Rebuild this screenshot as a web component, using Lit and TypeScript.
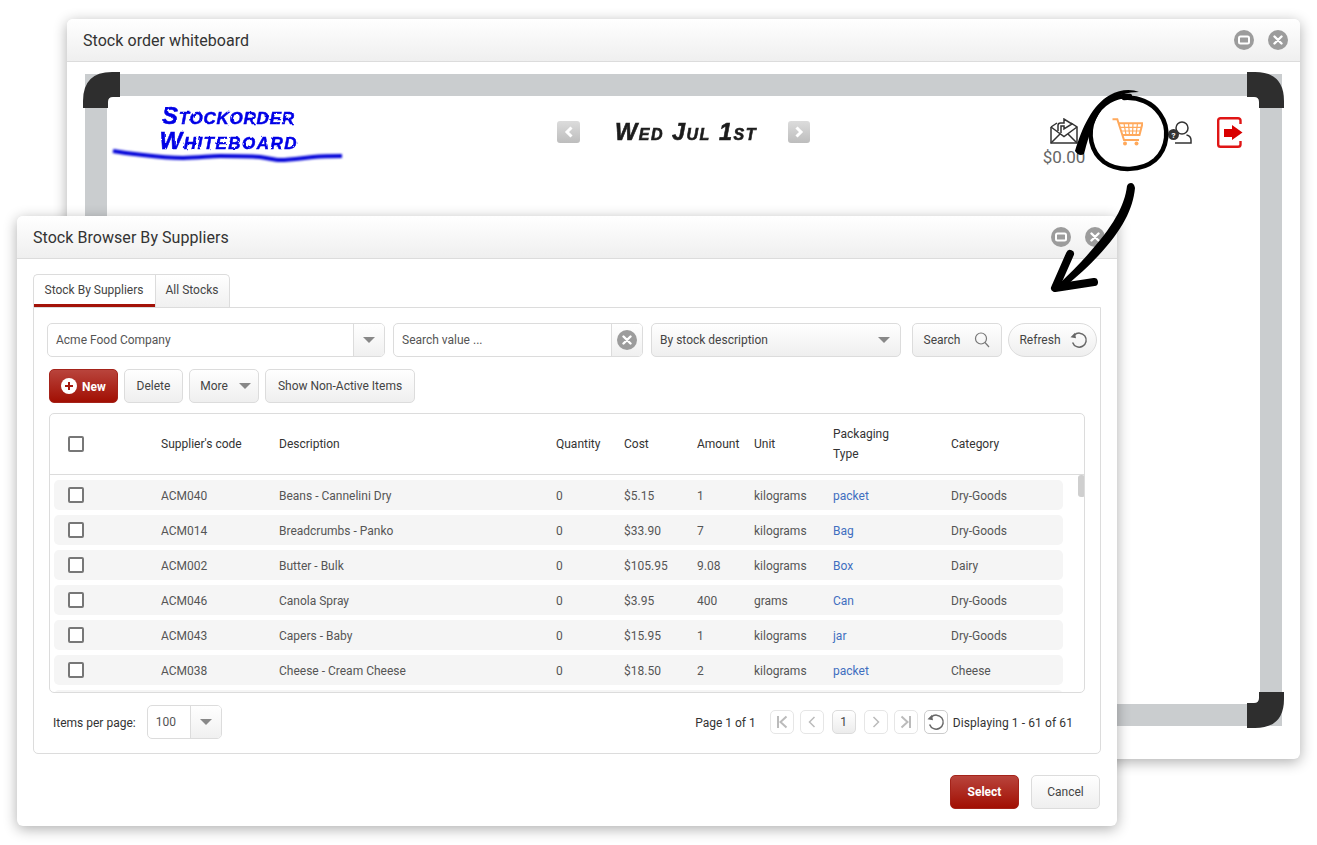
import { LitElement, html, css, svg } from 'lit';
import { customElement } from 'lit/decorators.js';

const rows = [
  ['ACM040', 'Beans - Cannelini Dry', '0', '$5.15', '1', 'kilograms', 'packet', 'Dry-Goods'],
  ['ACM014', 'Breadcrumbs - Panko', '0', '$33.90', '7', 'kilograms', 'Bag', 'Dry-Goods'],
  ['ACM002', 'Butter - Bulk', '0', '$105.95', '9.08', 'kilograms', 'Box', 'Dairy'],
  ['ACM046', 'Canola Spray', '0', '$3.95', '400', 'grams', 'Can', 'Dry-Goods'],
  ['ACM043', 'Capers - Baby', '0', '$15.95', '1', 'kilograms', 'jar', 'Dry-Goods'],
  ['ACM038', 'Cheese - Cream Cheese', '0', '$18.50', '2', 'kilograms', 'packet', 'Cheese'],
  ['', '', '', '', '', '', '', ''],
];

const refreshIcon = svg`<svg width="20" height="20" viewBox="0 0 20 20" fill="none">
  <path d="M5.2 5.2A7 7 0 1 1 3.6 12.5" stroke="#666" stroke-width="1.5"/>
  <path d="M1.5 7.2 7 8.3 6 2.8Z" fill="#666"/>
</svg>`;

const winButtons = html`<div class="win-btns">
  <span class="win-btn"><svg width="12" height="10" viewBox="0 0 12 10"><rect x="1" y="1.5" width="10" height="7" rx="1.5" fill="none" stroke="#fff" stroke-width="2"/></svg></span>
  <span class="win-btn"><svg width="10" height="10" viewBox="0 0 10 10"><path d="M1.5 1.5 8.5 8.5M8.5 1.5 1.5 8.5" stroke="#fff" stroke-width="2.4" stroke-linecap="round"/></svg></span>
</div>`;

const corner = (cls: string) => svg`<svg class="corner ${cls}" width="37" height="36" viewBox="0 0 37 36">
  <path d="M0 36V29Q0 0 29 0H37V25H30Q25 25 25 30V36Z" fill="#2e2e2e"/>
</svg>`;

@customElement('app-root')
export class AppRoot extends LitElement {
  static styles = css`
    :host {
      display: block;
      position: relative;
      width: 1317px;
      height: 845px;
      overflow: hidden;
      background: #fff;
      font-family: Roboto, 'Liberation Sans', sans-serif;
      font-size: 12px;
      color: #444;
    }

    .window {
      position: absolute;
      background: #fff;
      border-radius: 6px;
      box-shadow: 0 3px 14px rgba(0, 0, 0, 0.32);
      display: flex;
      flex-direction: column;
    }
    .back {
      left: 67px;
      top: 19px;
      width: 1233px;
      height: 740px;
    }
    .front {
      left: 17px;
      top: 216px;
      width: 1100px;
      height: 610px;
    }

    .win-title {
      height: 42px;
      flex: none;
      display: flex;
      align-items: center;
      padding: 0 12px 0 16px;
      font-size: 16px;
      letter-spacing: 0.05px;
      color: #333;
      border-bottom: 1px solid #dcdcdc;
      border-radius: 6px 6px 0 0;
      background: linear-gradient(#ffffff, #efefef);
    }
    .win-btns {
      margin-left: auto;
      display: flex;
      gap: 14px;
    }
    .win-btn {
      width: 20px;
      height: 20px;
      border-radius: 50%;
      background: #9c9c9c;
      display: flex;
      align-items: center;
      justify-content: center;
    }

    /* whiteboard */
    .back-body {
      padding: 12px 18px 33px;
      flex: 1;
      display: flex;
    }
    .board {
      position: relative;
      flex: 1;
      border: 22px solid #cacdcf;
      display: block;
    }
    .corner {
      position: absolute;
    }
    .tl {
      left: -24px;
      top: -24px;
    }
    .tr {
      right: -24px;
      top: -24px;
      transform: scaleX(-1);
    }
    .bl {
      left: -24px;
      bottom: -24px;
      transform: scaleY(-1);
    }
    .br {
      right: -24px;
      bottom: -24px;
      transform: scale(-1, -1);
    }
    .board-head {
      display: flex;
      align-items: flex-start;
      padding: 0 17px 0 7px;
    }
    .logo {
      width: 228px;
      height: 70px;
      flex: none;
      display: block;
      overflow: visible;
    }
    .logo text {
      font-family: 'Liberation Sans', sans-serif;
      font-weight: 700;
      font-style: italic;
      font-variant: small-caps;
      font-size: 24px;
      fill: #0000e6;
      stroke: #0000e6;
      stroke-width: 0.5px;
      text-anchor: middle;
    }
    .date-nav {
      display: flex;
      align-items: center;
      margin: 25px 0 0 215px;
    }
    .date-btn {
      width: 22px;
      height: 22px;
      flex: none;
      border-radius: 3px;
      background: linear-gradient(#dcdcdc, #bdbdbd);
      display: flex;
      align-items: center;
      justify-content: center;
    }
    .date-btn.prev {
      width: 23px;
    }
    .date {
      width: 204px;
      padding-left: 4px;
      text-align: center;
      font-family: 'Liberation Sans', sans-serif;
      font-weight: 700;
      font-style: italic;
      font-variant: small-caps;
      font-size: 23.5px;
      letter-spacing: 1.5px;
      line-height: 22px;
      color: #1c1c1c;
      -webkit-text-stroke: 0.6px #1c1c1c;
      filter: url(#rough-soft);
    }
    .board-icons {
      margin-left: auto;
      display: flex;
      align-items: flex-start;
    }
    .mail {
      margin-top: 22px;
      width: 42px;
      display: flex;
      flex-direction: column;
      align-items: center;
      font-size: 17px;
      color: #666;
      line-height: 20px;
    }
    .mail span {
      margin-top: 3px;
    }
    .cart {
      margin: 22px 0 0 27px;
    }
    .user {
      margin: 24px 0 0 24px;
    }
    .user text {
      font-family: Roboto, sans-serif;
      font-size: 8px;
      font-weight: 700;
      fill: #fff;
      stroke: none;
      text-anchor: middle;
    }
    .exit {
      margin: 21px 0 0 25px;
    }

    /* stock browser */
    .front-body {
      padding: 15px 16px 0;
      flex: 1;
      display: flex;
      flex-direction: column;
    }
    .tabs {
      display: flex;
      height: 33px;
      flex: none;
    }
    .tab {
      display: flex;
      align-items: center;
      justify-content: center;
      border: 1px solid #dcdcdc;
      border-bottom: none;
      border-radius: 5px 5px 0 0;
      color: #444;
      box-sizing: border-box;
      padding-bottom: 2px;
    }
    .tab.on {
      width: 122px;
      border-right: none;
      border-radius: 5px 0 0 0;
      box-shadow: inset 0 -3px 0 #a31208;
      padding-right: 1px;
    }
    .tab.off {
      width: 75px;
      border-radius: 0 5px 0 0;
      background: linear-gradient(#fff, #f0f0f0);
      padding-right: 1px;
    }
    .panel {
      height: 447px;
      box-sizing: border-box;
      border: 1px solid #dcdcdc;
      border-radius: 0 0 5px 5px;
      padding: 15px 13px 0;
      display: flex;
      flex-direction: column;
    }
    .bar {
      display: flex;
      height: 34px;
      flex: none;
    }
    .bar > * {
      flex: none;
    }
    .bar.top {
      gap: 8px;
    }
    .field {
      box-sizing: border-box;
      height: 34px;
      border: 1px solid #dcdcdc;
      border-radius: 5px;
      display: flex;
      align-items: center;
      overflow: hidden;
      color: #555;
      background: #fff;
    }
    .field .val {
      flex: 1;
      padding-left: 8px;
    }
    .field .end {
      width: 30px;
      height: 100%;
      flex: none;
      border-left: 1px solid #dcdcdc;
      background: linear-gradient(#fff, #f0f0f0);
      display: flex;
      align-items: center;
      justify-content: center;
    }
    .supplier {
      width: 338px;
    }
    .search-val {
      width: 250px;
    }
    .arrow {
      display: inline-block;
      width: 0;
      height: 0;
      border-left: 6px solid transparent;
      border-right: 6px solid transparent;
      border-top: 6px solid #888;
    }
    .clear {
      width: 20px;
      height: 20px;
      border-radius: 50%;
      background: #9c9c9c;
      display: flex;
      align-items: center;
      justify-content: center;
    }
    .btn {
      box-sizing: border-box;
      height: 34px;
      border: 1px solid #dcdcdc;
      border-radius: 5px;
      background: linear-gradient(#ffffff, #efefef);
      display: inline-flex;
      align-items: center;
      justify-content: center;
      gap: 8px;
      color: #444;
    }
    .btn.red {
      background: linear-gradient(#b9443c, #a10f03);
      border-color: #a5231a;
      color: #fff;
      font-weight: 700;
    }
    .sel {
      width: 250px;
      justify-content: space-between;
      padding: 0 10px 0 8px;
      margin-right: 3px;
    }
    .search-btn {
      width: 90px;
      gap: 14px;
      margin-right: -2px;
    }
    .refresh {
      width: 89px;
      padding-left: 3px;
      border-radius: 17px;
    }
    .bar.actions {
      margin: 12px 0 0 2px;
      gap: 6px;
    }
    .new {
      width: 69px;
      gap: 5px;
    }
    .new span {
      padding-top: 2px;
    }
    .delete {
      width: 59px;
    }
    .more {
      width: 70px;
      gap: 11px;
      padding-left: 3px;
    }
    .show {
      width: 150px;
    }

    .grid-box {
      position: relative;
      margin: 10px 0 0 2px;
      width: 1036px;
      height: 280px;
      flex: none;
      box-sizing: border-box;
      border: 1px solid #dcdcdc;
      border-radius: 5px;
      overflow: hidden;
    }
    .cols {
      display: grid;
      grid-template-columns: 93px 118px 277px 68px 73px 57px 79px 118px 1fr;
      align-items: center;
    }
    .head {
      height: 60px;
      padding-left: 18px;
      border-bottom: 1px solid #dcdcdc;
      color: #333;
      line-height: 20px;
    }
    .list {
      display: flex;
      flex-direction: column;
      gap: 5px;
      padding: 5px 0 0 4px;
    }
    .row {
      width: 1009px;
      height: 30px;
      flex: none;
      box-sizing: border-box;
      padding-left: 14px;
      background: #f5f5f5;
      border-radius: 5px;
      color: #555;
    }
    .row .cell {
      padding-top: 2px;
    }
    .check {
      width: 16px;
      height: 16px;
      box-sizing: border-box;
      border: 2px solid #777;
      border-radius: 2px;
      background: #fff;
    }
    .link {
      color: #3f6fc0;
    }
    .thumb {
      position: absolute;
      left: 1028px;
      top: 61px;
      width: 7px;
      height: 22px;
      border-radius: 3px;
      background: #cfcfcf;
    }

    .foot {
      display: flex;
      align-items: center;
      height: 34px;
      margin-top: 12px;
      padding: 0 14px 0 6px;
      color: #333;
    }
    .foot .txt {
      padding-top: 2px;
    }
    .per-page {
      width: 75px;
      margin-left: 11px;
    }
    .pager {
      margin-left: auto;
      display: flex;
      align-items: center;
      gap: 6px;
    }
    .pager .label {
      margin-right: 8px;
    }
    .pg {
      box-sizing: border-box;
      width: 24px;
      height: 24px;
      border: 1px solid #e6e6e6;
      border-radius: 5px;
      display: flex;
      align-items: center;
      justify-content: center;
      background: #fff;
    }
    .pg.cur {
      margin: 0 2px;
      border-color: #dcdcdc;
      background: linear-gradient(#fff, #ececec);
      color: #444;
    }
    .pg.live {
      border-color: #ccc;
    }
    .pager .info {
      margin-left: -1px;
      letter-spacing: 0.1px;
    }
    .dialog-btns {
      display: flex;
      justify-content: flex-end;
      gap: 12px;
      margin: 21px 1px 0 0;
    }
    .dialog-btns .btn {
      width: 69px;
    }

    .marks {
      position: absolute;
      left: 0;
      top: 0;
      pointer-events: none;
    }
  `;

  render() {
    return html`
      <div class="window back">
        <div class="win-title">Stock order whiteboard ${winButtons}</div>
        <div class="back-body">
          <div class="board">
            ${corner('tl')}${corner('tr')}${corner('bl')}${corner('br')}
            <div class="board-head">
              <svg class="logo" viewBox="0 0 228 70">
                <defs>
                  <filter id="brush" filterUnits="userSpaceOnUse" x="-10" y="40" width="250" height="35">
                    <feGaussianBlur stdDeviation="1" />
                  </filter>
                  <filter id="rough" x="-5%" y="-20%" width="110%" height="140%">
                    <feTurbulence type="fractalNoise" baseFrequency="0.18" numOctaves="2" seed="4" />
                    <feDisplacementMap in="SourceGraphic" scale="2.5" />
                  </filter>
                  <filter id="rough-soft" x="-5%" y="-20%" width="110%" height="140%">
                    <feTurbulence type="fractalNoise" baseFrequency="0.12" numOctaves="1" seed="7" />
                    <feDisplacementMap in="SourceGraphic" scale="1.5" />
                  </filter>
                </defs>
                <text x="114" y="28" textLength="132" lengthAdjust="spacing" filter="url(#rough)">Stockorder</text>
                <text x="114" y="53" textLength="137" lengthAdjust="spacing" filter="url(#rough)">Whiteboard</text>
                <path d="M-1 55C10 57 18 58 29 59C45 61 55 62 69 62C85 62 95 60 106 60C120 60 135 60 146 61C155 62 160 64 166 64C178 64 188 62 199 61C210 60 220 60 228 60"
                  fill="none" stroke="#0000d8" stroke-width="4" filter="url(#brush)" />
              </svg>
              <div class="date-nav">
                <span class="date-btn prev"><svg width="10" height="12" viewBox="0 0 10 12"><path d="M7.500 1.500 3 6l4.500 4.500" fill="none" stroke="#fff" stroke-width="3"/></svg></span>
                <span class="date">Wed Jul 1st</span>
                <span class="date-btn"><svg width="10" height="12" viewBox="0 0 10 12"><path d="M2.500 1.500 7 6l-4.500 4.500" fill="none" stroke="#fff" stroke-width="3"/></svg></span>
              </div>
              <div class="board-icons">
                <div class="mail">
                  <svg width="28" height="26" viewBox="0 0 28 26" fill="none" stroke="#333" stroke-width="1.500">
                    <path d="M1 9V25H27V9L21 5M1 9 7 5" />
                    <path d="M1 9 14 18.500 27 9M1 25 10.500 15.500M27 25 17.500 15.500" />
                    <path d="M8 13V7.500Q8 5 10.500 5H14V1L22 6 14 11V8H11V15" fill="#fff" />
                  </svg>
                  <span>$0.00</span>
                </div>
                <svg class="cart" width="31" height="28" viewBox="0 0 31 28" fill="none" stroke="#ffa95c" stroke-width="2">
                  <path d="M0.500 1.300H5.300L12 22H27" />
                  <path d="M7 5.300H30.500L27.500 17H10" />
                  <path d="M12 5.300 14 17M16.500 5.300 17.500 17M21 5.300 20.500 17M25.500 5.300 24 17M8 9.300H29.500M9 13H28.500" stroke-width="1.200" />
                  <circle cx="13" cy="25.500" r="2" fill="#ffa95c" stroke="none" />
                  <circle cx="24.500" cy="25.500" r="2" fill="#ffa95c" stroke="none" />
                </svg>
                <svg class="user" width="25" height="26" viewBox="0 0 25 26" fill="none" stroke="#333" stroke-width="1.500">
                  <circle cx="15" cy="8" r="6" />
                  <path d="M8 23H24V20Q24 16 19.500 15" />
                  <circle cx="6.500" cy="14.500" r="5.500" fill="#333" stroke="none" />
                  <text x="6.500" y="17.500">?</text>
                </svg>
                <svg class="exit" width="26" height="31" viewBox="0 0 26 31" fill="none">
                  <path d="M23.500 7V3.500Q23.500 1.200 21 1.200H3.500Q1.200 1.200 1.200 3.500V27.500Q1.200 29.800 3.500 29.800H21Q23.500 29.800 23.500 27.500V24" stroke="#e01515" stroke-width="2.400" />
                  <path d="M7 12H15V8L25.500 15.500 15 23V20H7Z" fill="#d90000" />
                </svg>
              </div>
            </div>
          </div>
        </div>
      </div>

      <div class="window front">
        <div class="win-title">Stock Browser By Suppliers ${winButtons}</div>
        <div class="front-body">
          <div class="tabs">
            <div class="tab on">Stock By Suppliers</div>
            <div class="tab off">All Stocks</div>
          </div>
          <div class="panel">
            <div class="bar top">
              <div class="field supplier">
                <span class="val">Acme Food Company</span>
                <span class="end"><i class="arrow"></i></span>
              </div>
              <div class="field search-val">
                <span class="val">Search value ...</span>
                <span class="end">
                  <span class="clear"><svg width="10" height="10" viewBox="0 0 10 10"><path d="M1.500 1.500 8.500 8.500M8.500 1.500 1.500 8.500" stroke="#fff" stroke-width="2.400" stroke-linecap="round"/></svg></span>
                </span>
              </div>
              <div class="btn sel">By stock description <i class="arrow"></i></div>
              <div class="btn search-btn">
                Search
                <svg width="16" height="16" viewBox="0 0 16 16" fill="none" stroke="#777" stroke-width="1.200">
                  <circle cx="7" cy="6.500" r="5.500" /><path d="M11 10.500 15 15" />
                </svg>
              </div>
              <div class="btn refresh">Refresh ${refreshIcon}</div>
            </div>
            <div class="bar actions">
              <div class="btn red new">
                <svg width="16" height="16" viewBox="0 0 16 16"><circle cx="8" cy="8" r="8" fill="#fff"/><path d="M8 4v8M4 8h8" stroke="#a5170d" stroke-width="2"/></svg>
                <span>New</span>
              </div>
              <div class="btn delete">Delete</div>
              <div class="btn more">More <i class="arrow"></i></div>
              <div class="btn show">Show Non-Active Items</div>
            </div>
            <div class="grid-box">
              <div class="cols head">
                <span class="check"></span>
                <span>Supplier's code</span>
                <span>Description</span>
                <span>Quantity</span>
                <span>Cost</span>
                <span>Amount</span>
                <span>Unit</span>
                <span>Packaging<br />Type</span>
                <span>Category</span>
              </div>
              <div class="list">
                ${rows.map(
                  (r) => html`<div class="cols row">
                    ${r[0] ? html`<span class="check"></span>` : html`<span></span>`}
                    <span class="cell">${r[0]}</span>
                    <span class="cell">${r[1]}</span>
                    <span class="cell">${r[2]}</span>
                    <span class="cell">${r[3]}</span>
                    <span class="cell">${r[4]}</span>
                    <span class="cell">${r[5]}</span>
                    <span class="cell link">${r[6]}</span>
                    <span class="cell">${r[7]}</span>
                  </div>`
                )}
              </div>
              <div class="thumb"></div>
            </div>
            <div class="foot">
              <span class="txt">Items per page:</span>
              <div class="field per-page">
                <span class="val">100</span>
                <span class="end"><i class="arrow"></i></span>
              </div>
              <div class="pager">
                <span class="label txt">Page 1 of 1</span>
                <span class="pg"><svg width="14" height="14" viewBox="0 0 14 14" fill="none" stroke="#bbb" stroke-width="2"><path d="M3 1v12M11.500 1.500 5.500 7l6 5.500"/></svg></span>
                <span class="pg"><svg width="14" height="14" viewBox="0 0 14 14" fill="none" stroke="#bbb" stroke-width="1.500"><path d="M9.500 2 4.500 7l5 5"/></svg></span>
                <span class="pg cur">1</span>
                <span class="pg"><svg width="14" height="14" viewBox="0 0 14 14" fill="none" stroke="#bbb" stroke-width="1.500"><path d="M4.500 2l5 5-5 5"/></svg></span>
                <span class="pg"><svg width="14" height="14" viewBox="0 0 14 14" fill="none" stroke="#bbb" stroke-width="2"><path d="M11 1v12M2.500 1.500 8.500 7l-6 5.500"/></svg></span>
                <span class="pg live">${refreshIcon}</span>
                <span class="info txt">Displaying 1 - 61 of 61</span>
              </div>
            </div>
          </div>
          <div class="dialog-btns">
            <div class="btn red">Select</div>
            <div class="btn">Cancel</div>
          </div>
        </div>
      </div>

      <svg class="marks" width="1317" height="845" viewBox="0 0 1317 845" fill="none" stroke="#000" stroke-linecap="round" stroke-linejoin="round">
        <path d="M1075 151C1082 128 1092 105 1110 95C1120 89 1132 89 1139 92C1128 92 1118 95 1110 100C1098 110 1090 130 1084 154Q1079 157 1075 151Z" fill="#000" stroke="none" />
        <path d="M1130 96C1116 95 1101 103 1094 118C1087 134 1091 152 1104 162C1118 172 1142 171 1155 160C1168 148 1170 128 1160 114C1152 102 1138 97 1124 98" stroke-width="4.500" />
        <path d="M1127 186C1124 212 1105 240 1056 287L1060 291C1112 248 1132 218 1135 188Q1134 183 1131 183Q1128 183 1127 186Z" fill="#000" stroke="none" />
        <path d="M1070 254 1055 288 1094 282" stroke-width="8" />
      </svg>
    `;
  }
}
